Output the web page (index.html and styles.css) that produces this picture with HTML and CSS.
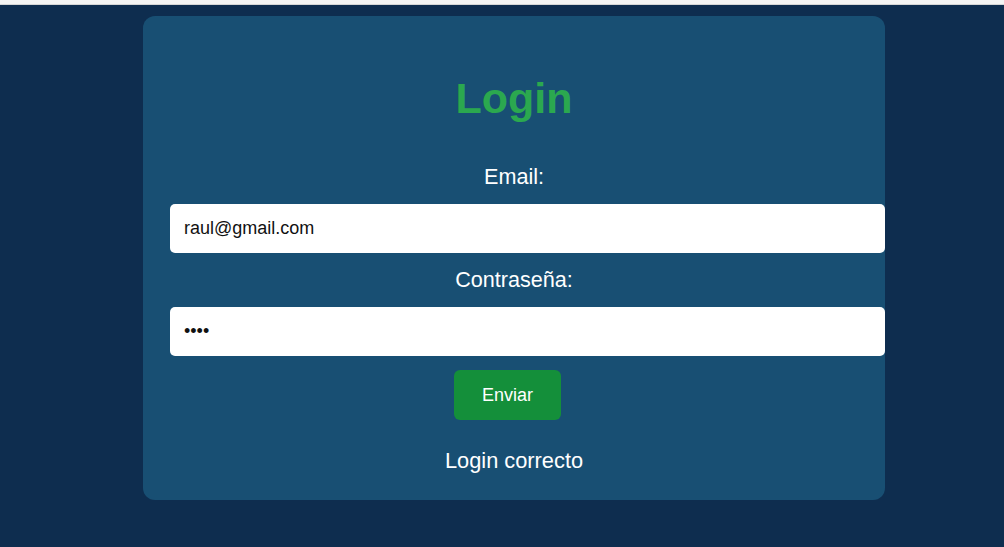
FILE: index.html
```html
<!DOCTYPE html>
<html lang="es">
<head>
<meta charset="utf-8">
<title>Login</title>
<link rel="stylesheet" href="styles.css">
</head>
<body>
<div class="topstrip"></div>
<main class="page">
  <section class="card">
    <h1 class="title">Login</h1>
    <form class="form" onsubmit="return false;">
      <label class="label" for="email">Email:</label>
      <input class="field" id="email" type="email" value="raul@gmail.com">
      <label class="label label-second" for="pass">Contraseña:</label>
      <input class="field" id="pass" type="password" value="1234">
      <button class="btn" type="submit">Enviar</button>
    </form>
    <p class="message">Login correcto</p>
  </section>
</main>
</body>
</html>
```

FILE: styles.css
```css
html, body {
  margin: 0;
  padding: 0;
  height: 100%;
}
body {
  background: #0e2d4f;
  font-family: "Liberation Sans", Arial, sans-serif;
  display: flex;
  flex-direction: column;
}
.topstrip {
  height: 4px;
  background: #f4f4f4;
  border-bottom: 1px solid #d6d6d6;
  flex: none;
}
.page {
  flex: 1;
  padding: 11px 0 0 143px;
}
.card {
  width: 688px;
  padding: 27px;
  background: #184f73;
  border-radius: 12px;
  display: flex;
  flex-direction: column;
}
.title {
  margin: 31px 0 41px;
  font-size: 43px;
  line-height: 49px;
  font-weight: bold;
  color: #2ba84f;
  text-align: center;
}
.form {
  display: flex;
  flex-direction: column;
  margin: 0;
}
.label {
  display: block;
  font-size: 21.6px;
  line-height: 25px;
  color: #ffffff;
  text-align: center;
  margin: 0 0 15px;
}
.label-second {
  margin-top: 14px;
}
.field {
  display: block;
  box-sizing: content-box;
  width: 100%;
  height: 21px;
  padding: 14px 13px 14px 14px;
  border: 0;
  border-radius: 5px;
  background: #ffffff;
  color: #111111;
  font-family: "Liberation Sans", Arial, sans-serif;
  font-size: 18px;
  outline: none;
}
.btn {
  align-self: center;
  margin: 14px 13px 0 0;
  height: 50px;
  padding: 0 28px;
  border: 0;
  border-radius: 6px;
  background: #148f3a;
  color: #ffffff;
  font-family: "Liberation Sans", Arial, sans-serif;
  font-size: 18px;
  cursor: pointer;
}
.message {
  margin: 28px 0 0;
  font-size: 21.8px;
  line-height: 25px;
  color: #ffffff;
  text-align: center;
}
```
